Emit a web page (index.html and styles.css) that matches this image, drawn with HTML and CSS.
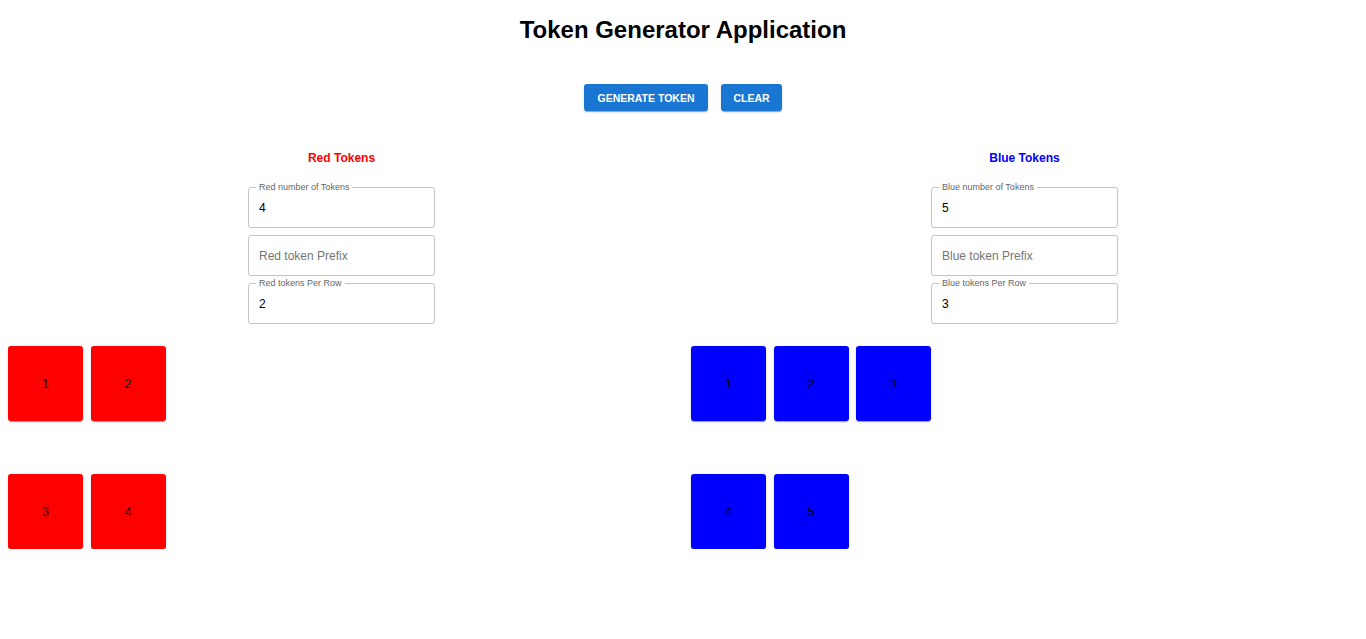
FILE: index.html
```html
<!DOCTYPE html>
<html>
<head>
<meta charset="utf-8">
<title>Token Generator Application</title>
<link rel="stylesheet" href="styles.css">
</head>
<body>
<h1 class="title">Token Generator Application</h1>
<div class="actions">
  <button class="btn btn-wide">GENERATE TOKEN</button>
  <button class="btn btn-narrow">CLEAR</button>
</div>
<div class="halves">
  <section class="half">
    <div class="form">
      <h2 class="heading red-text">Red Tokens</h2>
      <div class="field">
        <span class="float-label">Red number of Tokens</span>
        <span class="value">4</span>
      </div>
      <div class="field">
        <span class="placeholder">Red token Prefix</span>
      </div>
      <div class="field">
        <span class="float-label">Red tokens Per Row</span>
        <span class="value">2</span>
      </div>
    </div>
    <div class="rows">
      <div class="row">
        <div class="token red">1</div>
        <div class="token red">2</div>
      </div>
      <div class="row">
        <div class="token red">3</div>
        <div class="token red">4</div>
      </div>
    </div>
  </section>
  <section class="half">
    <div class="form">
      <h2 class="heading blue-text">Blue Tokens</h2>
      <div class="field">
        <span class="float-label">Blue number of Tokens</span>
        <span class="value">5</span>
      </div>
      <div class="field">
        <span class="placeholder">Blue token Prefix</span>
      </div>
      <div class="field">
        <span class="float-label">Blue tokens Per Row</span>
        <span class="value">3</span>
      </div>
    </div>
    <div class="rows">
      <div class="row">
        <div class="token blue">1</div>
        <div class="token blue">2</div>
        <div class="token blue">3</div>
      </div>
      <div class="row">
        <div class="token blue">4</div>
        <div class="token blue">5</div>
      </div>
    </div>
  </section>
</div>
</body>
</html>
```

FILE: styles.css
```css
* { box-sizing: border-box; }
html, body { margin: 0; padding: 0; background: #fff; }
body {
  font-family: "Liberation Sans", Arial, sans-serif;
  color: #000;
}
.title {
  margin: 0;
  padding-top: 16px;
  font-size: 24px;
  line-height: 28px;
  font-weight: 700;
  text-align: center;
}
.actions {
  display: flex;
  justify-content: center;
  gap: 13px;
  margin-top: 40px;
}
.btn {
  height: 27px;
  padding: 0;
  border: none;
  border-radius: 3px;
  background: #1976d2;
  color: #fff;
  font-family: "Liberation Sans", Arial, sans-serif;
  font-size: 10.5px;
  font-weight: 700;
  white-space: nowrap;
  text-align: center;
  box-shadow: 0 2px 1px -1px rgba(0,0,0,0.2), 0 1px 1px 0 rgba(0,0,0,0.14), 0 1px 3px 0 rgba(0,0,0,0.12);
}
.btn-wide { width: 124px; }
.btn-narrow { width: 61px; }
.halves {
  display: flex;
  margin-top: 40px;
}
.half {
  flex: 1 1 0;
  display: flex;
  flex-direction: column;
}
.form {
  display: flex;
  flex-direction: column;
  align-items: center;
  gap: 7px;
}
.heading {
  margin: 0 0 15px 0;
  font-size: 12px;
  line-height: 14px;
  font-weight: 700;
}
.red-text { color: #ff0000; }
.blue-text { color: #0000ff; }
.field {
  position: relative;
  width: 187px;
  height: 41px;
  border: 1px solid #c4c4c4;
  border-radius: 3px;
  display: flex;
  align-items: center;
  padding: 0 10px;
  font-size: 12px;
}
.float-label {
  position: absolute;
  top: -6px;
  left: 7px;
  padding: 0 3px;
  background: #fff;
  font-size: 9px;
  line-height: 11px;
  color: #666;
}
.value { color: #000; }
.placeholder { color: #757575; }
.rows {
  display: flex;
  flex-direction: column;
  gap: 53px;
  margin-top: 22px;
  padding-left: 8px;
}
.row {
  display: flex;
  gap: 7.5px;
}
.token {
  width: 75px;
  height: 75px;
  border-radius: 3px;
  display: flex;
  align-items: center;
  justify-content: center;
  font-size: 12px;
  color: #000;
  box-shadow: 0 2px 1px -1px rgba(0,0,0,0.2), 0 1px 1px 0 rgba(0,0,0,0.14), 0 1px 3px 0 rgba(0,0,0,0.12);
}
.red { background: #ff0000; }
.blue { background: #0000ff; }
```
